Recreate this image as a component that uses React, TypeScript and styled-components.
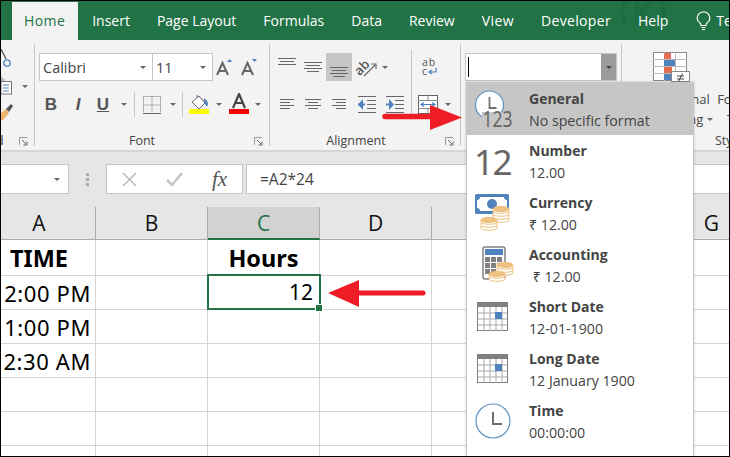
import React from 'react';
import styled, { createGlobalStyle } from 'styled-components';

const Global = createGlobalStyle`
  html, body { margin: 0; padding: 0; background: #fff; }
  * { box-sizing: border-box; }
`;
const UI = `"Open Sans", "Noto Sans", "Liberation Sans", sans-serif`;
const CELL = `"Noto Sans", "Open Sans", sans-serif`;

const Frame = styled.div`
  position: relative; width: 730px; height: 457px; overflow: hidden;
  display: flex; flex-direction: column;
  border: 1px solid #000;
  font-family: ${UI}; background: #fff;
`;
const TabBar = styled.div`
  position: relative; height: 39px; flex: none; background: #217346; display: flex; align-items: stretch; padding-left: 11px; padding-top: 1px;
`;
const Tab = styled.div<{ $active?: boolean; $ls?: number }>`
  position: relative; display: flex; align-items: center; justify-content: center;
  padding: 0 13px 1px ${p => (p.$active ? 12 : 13)}px; margin-right: 1px;
  white-space: nowrap; letter-spacing: ${p => p.$ls ?? 0}px;
  font-size: 14px; color: ${p => (p.$active ? '#217346' : '#fff')};
  background: ${p => (p.$active ? '#f3f3f3' : 'transparent')};
`;
const Tell = styled(Tab)`gap: 5px; padding-left: 14px;`;
const Watermark = styled.svg`position: absolute; left: 615px; top: -3px; width: 54px; height: 28px;`;

const Ribbon = styled.div`
  height: 112px; flex: none; background: #f3f3f3; display: flex; padding: 4px 0 4px;
  border-bottom: 2px solid #d6d6d6;
`;
const Group = styled.div<{ $w: number; $pl?: number }>`
  position: relative; width: ${p => p.$w}px; flex: none; display: flex; flex-direction: column;
  padding-left: ${p => p.$pl ?? 0}px; border-right: 1px solid #c6c6c6;
`;
const LastGroup = styled(Group)`border-right: none;`;
const Body = styled.div`display: flex; flex: none;`;
const Col = styled.div<{ $w?: number }>`
  display: flex; flex-direction: column; ${p => (p.$w ? `width:${p.$w}px;flex:none;` : '')}
`;
const Row1 = styled.div`display: flex; height: 28px; margin-top: 9px; flex: none;`;
const Row2 = styled.div`display: flex; height: 25px; margin-top: 11px; flex: none;`;
const Slot = styled.div<{ $w: number; $on?: boolean }>`
  width: ${p => p.$w}px; flex: none; display: flex; align-items: center; justify-content: center;
  background: ${p => (p.$on ? '#c6c6c6' : 'transparent')};
`;
const VSep = styled.div`width: 1px; height: 25px; background: #c6c6c6; flex: none;`;
const InnerSep = styled.div`width: 1px; height: 70px; margin-top: 6px; background: #c6c6c6; flex: none;`;
const Label = styled.div<{ $pr?: number }>`
  margin-top: auto; margin-bottom: -3px; height: 16px; line-height: 16px; font-size: 12.5px; color: #444; text-align: center; white-space: nowrap;
  padding-right: ${p => p.$pr ?? 0}px;
`;
const Launcher = styled.svg`position: absolute; right: 6px; bottom: 0; width: 9px; height: 9px;`;
const Caret = styled.i<{ $dark?: boolean }>`
  display: block; flex: none; width: 0; height: 0; border-left: 3.5px solid transparent; border-right: 3.5px solid transparent;
  border-top: 3.5px solid ${p => (p.$dark ? '#444' : '#666')};
`;
const Combo = styled.div<{ $w: number }>`
  width: ${p => p.$w}px; height: 28px; flex: none; background: #fff; border: 1px solid #c6c6c6;
  display: flex; align-items: center; justify-content: space-between; padding: 0 6px 0 3px;
  font-size: 14.5px; color: #444; margin-right: -1px;
`;
const NumberCombo = styled.div`
  width: 152px; height: 28px; flex: none; background: #fff; border: 1px solid #c6c6c6;
  display: flex; align-items: stretch; justify-content: space-between; padding-left: 2px;
`;
const Cursor = styled.i`display: block; width: 1px; height: 20px; margin-top: 3px; background: #000;`;
const ComboBtn = styled.div`width: 15px; background: #9b9b9b; display: flex; align-items: center; justify-content: center;`;
const Glyph = styled.span<{ $kind: 'b' | 'i' | 'u' }>`
  font-family: "Liberation Sans", sans-serif; font-size: 17px; color: #555; line-height: 1;
  font-weight: 700;
  font-style: ${p => (p.$kind === 'i' ? 'italic' : 'normal')};
  text-decoration: ${p => (p.$kind === 'u' ? 'underline' : 'none')};
`;
const StyleCol = styled.div<{ $w: number; $pl?: number }>`
  width: ${p => p.$w}px; flex: none; display: flex; flex-direction: column; align-items: center;
  padding-left: ${p => p.$pl ?? 0}px;
`;
const StyleIcon = styled.div<{ $ml?: number }>`
  height: 37px; margin-top: 8px; display: flex; align-items: flex-start; flex: none; align-self: flex-start;
  margin-left: ${p => p.$ml ?? 0}px;
`;
const StyleText = styled.div`
  font-size: 13px; line-height: 20px; color: #444; white-space: nowrap; display: flex; align-items: center; gap: 4px;
`;
const TableText = styled(StyleText)`margin-left: 9px;`;
const StyleLabel = styled(Label)`padding-left: 93px; text-align: left;`;
const ClipCol = styled.div`display: flex; flex-direction: column; height: 82px; padding-top: 3px;`;
const ClipRow = styled.div<{ $h: number }>`display: flex; height: ${p => p.$h}px; align-items: center; gap: 9px; flex: none;`;
const ClipLabel = styled(Label)`margin-left: -5px; text-align: left;`;

const FormulaArea = styled.div`
  height: 55px; flex: none; background: #e6e6e6; display: flex; align-items: flex-start; padding-top: 12px;
`;
const NameBox = styled.div`
  width: 68px; height: 30px; flex: none; background: #fff; border: 1px solid #c6c6c6; border-left: none;
  display: flex; align-items: center; justify-content: flex-end; padding-right: 8px;
`;
const Dots = styled.div`
  width: 37px; flex: none; height: 30px; display: flex; flex-direction: column; gap: 2px; align-items: center; justify-content: center;
  i { display: block; width: 3px; height: 3px; background: #a8a8a8; }
`;
const FxBox = styled.div`
  width: 137px; height: 30px; flex: none; background: #fff; border: 1px solid #c6c6c6; display: flex; align-items: center;
`;
const FxSlot = styled.div`width: 45px; flex: none; display: flex; align-items: center; justify-content: center;`;
const Fx = styled.span`font-family: "Liberation Serif", serif; font-style: italic; font-size: 21px; color: #555; line-height: 1;`;
const FormulaInput = styled.div`
  flex: 1; height: 30px; margin-left: 3px; background: #fff; border: 1px solid #c6c6c6; border-right: none;
  display: flex; align-items: center; padding-left: 13px; font-size: 15.5px; color: #444;
`;

const Sheet = styled.div`
  display: grid; grid-template-columns: 95px repeat(6, 112px); grid-auto-rows: 34px; flex: 1; overflow: hidden;
  grid-template-rows: 33px 36px; background: #fff; font-family: ${CELL};
`;
const Head = styled.div<{ $sel?: boolean; $pr?: number }>`
  background: ${p => (p.$sel ? '#d2d2d2' : '#e6e6e6')}; display: flex; align-items: center; justify-content: center;
  font-size: 21px; line-height: 1; color: ${p => (p.$sel ? '#217346' : '#111')};
  border-right: 1px solid #ababab;
  border-bottom: ${p => (p.$sel ? '2px solid #217346' : '1px solid #ababab')};
  font-family: ${UI};
  padding-top: 1px; padding-right: ${p => p.$pr ?? 0}px;
`;
const Cell = styled.div<{ $bold?: boolean; $align?: string; $pr?: number }>`
  position: relative; display: flex; align-items: center; justify-content: ${p => p.$align ?? 'flex-end'};
  padding-right: ${p => p.$pr ?? 4}px; overflow: hidden; white-space: nowrap;
  border-right: 1px solid #d4d4d4; border-bottom: 1px solid #d4d4d4;
  padding-top: ${p => (p.$bold ? 1 : 0)}px;
  font-size: ${p => (p.$bold ? 23.5 : 22)}px; font-weight: ${p => (p.$bold ? 700 : 400)}; color: #000;
  letter-spacing: ${p => (p.$bold ? 0 : 0.6)}px;
`;
const SelCell = styled.div`
  position: relative; z-index: 2; margin: -2px -1px 0 -1px; border: 2px solid #217346; display: flex; align-items: center;
  justify-content: flex-end; padding-right: 6px; font-size: 21px; color: #000; background: #fff;
  &::after { content: ''; position: absolute; right: -4px; bottom: -4px; width: 6px; height: 6px; background: #217346; border: 1px solid #fff; }
`;

const Menu = styled.div`
  position: absolute; left: 465px; top: 81px; width: 228px; height: 380px; background: #fff;
  border: 1px solid #c6c6c6; box-shadow: 0 0 2px rgba(0,0,0,.25); z-index: 5;
  display: flex; flex-direction: column;
`;
const Item = styled.div<{ $on?: boolean }>`
  height: 52px; flex: none; display: flex; background: ${p => (p.$on ? '#c6c6c6' : 'transparent')};
`;
const ItemIcon = styled.div`width: 62px; flex: none; padding-right: 11px; display: flex; align-items: center; justify-content: center;`;
const ItemText = styled.div`display: flex; flex-direction: column; padding-top: 5px; color: #444;`;
const Title = styled.div`font-size: 14px; line-height: 22px; font-weight: 700; color: #444;`;
const Desc = styled.div`font-size: 14.2px; line-height: 22px; color: #444;`;
const BigNum = styled.span`font-size: 35px; line-height: 1; color: #666; font-family: ${CELL}; letter-spacing: -1.5px;`;
const CalcSvg = styled.svg`margin-left: 10px; flex: none;`;
const Overlay = styled.svg`position: absolute; z-index: 6; overflow: visible;`;
const RightArrow = styled(Overlay)`left: 380px; top: 103px;`;
const LeftArrow = styled(Overlay)`left: 326px; top: 277px;`;

const L = ({ w, h, lines }: { w: number; h: number; lines: [number, number, number][] }) => (
  <svg width={w} height={h}>
    {lines.map(([x, y, len], i) => <rect key={i} x={x} y={y} width={len} height={1} fill="#666" />)}
  </svg>
);
const Launch = () => (
  <Launcher viewBox="0 0 9 9">
    <path d="M.5 8V.5H8" fill="none" stroke="#999" />
    <path d="M3 3l4 4M8 4.5V8H4.5" fill="none" stroke="#666" />
  </Launcher>
);
const Clock = () => (
  <svg width="36" height="36" viewBox="0 0 36 36">
    <circle cx="18" cy="18" r="17" fill="#fff" stroke="#5b8fc0" strokeWidth="1.2" />
    <path d="M18 9v12h9" fill="none" stroke="#707070" strokeWidth="2" />
  </svg>
);
const Calendar = () => (
  <svg width="32" height="30" viewBox="0 0 32 30">
    <rect x=".5" y=".5" width="30" height="28" fill="#fff" stroke="#808080" />
    <rect x="0" y="0" width="31" height="5" fill="#808080" />
    {[6.5, 12.5, 18.5, 24.5].map(x => <rect key={x} x={x} y="5" width="1" height="24" fill="#aaa" />)}
    {[10.5, 16.5, 22.5].map(y => <rect key={y} x="1" y={y} width="29" height="1" fill="#aaa" />)}
    <rect x="18" y="10" width="7" height="7" fill="#4f81bd" />
  </svg>
);
const Coins = ({ x, y, n = 3 }: { x: number; y: number; n?: number }) => (
  <g stroke="#edc27f" strokeWidth="1">
    {Array.from({ length: n }, (_, i) => n - 1 - i).map(i => (
      <path key={i} d={`M${x - 8} ${y + i * 3}c0 3 16 3 16 0v-2h-16z`} fill="#fff" />
    ))}
    <ellipse cx={x} cy={y - 2} rx="8" ry="2.600" fill="#edc27f" />
  </g>
);

export default function App() {
  return (
    <Frame>
      <Global />
      <TabBar>
        <Watermark viewBox="0 0 54 28">
          <g fill="none" stroke="#1e6c40" strokeWidth="4">
            <path d="M10 2a24 24 0 0 0 0 24M44 2a24 24 0 0 1 0 24" />
            <path d="M21 4v20M37 4L23 15l14 10" />
          </g>
        </Watermark>
        <Tab $active $ls={0.4}>Home</Tab>
        <Tab>Insert</Tab>
        <Tab>Page Layout</Tab>
        <Tab>Formulas</Tab>
        <Tab>Data</Tab>
        <Tab>Review</Tab>
        <Tab $ls={0.4}>View</Tab>
        <Tab $ls={0.35}>Developer</Tab>
        <Tab>Help</Tab>
        <Tell>
          <svg width="15" height="20" viewBox="0 0 15 20">
            <path d="M7.500 1a6 6 0 0 0-3.500 11c.7.6 1 1.200 1 2.500h5c0-1.300.3-1.900 1-2.500a6 6 0 0 0-3.500-11zM5.500 16.500h4M6 18.500h3" fill="none" stroke="#fff" strokeWidth="1.200" />
          </svg>
          Tell me
        </Tell>
      </TabBar>

      <Ribbon>
        <Group $w={34}>
          <ClipCol>
            <ClipRow $h={24}>
              <svg width="10" height="20" viewBox="0 0 10 20">
                <path d="M0 0l5 10" stroke="#666" strokeWidth="1.500" />
                <circle cx="6" cy="14" r="3.200" fill="none" stroke="#4f81bd" strokeWidth="1.300" />
              </svg>
            </ClipRow>
            <ClipRow $h={30}>
              <svg width="12" height="18" viewBox="0 0 12 18">
                <path d="M0 3h4M0 1h2" stroke="#888" />
                <rect x="0" y="4.500" width="10.500" height="12.500" fill="#fff" stroke="#777" />
                <path d="M2 8h6M2 11h6M2 14h6" stroke="#4f81bd" />
              </svg>
              <Caret />
            </ClipRow>
            <ClipRow $h={22}>
              <svg width="12" height="18" viewBox="0 0 12 18">
                <path d="M0 10l5-4 3 4-6 7H0z" fill="#efb36f" />
                <path d="M5 6l5-5 2 2-4 6z" fill="#555" />
              </svg>
            </ClipRow>
          </ClipCol>
          <ClipLabel>d</ClipLabel>
          <Launch />
        </Group>

        <Group $w={235} $pl={4}>
          <Row1>
            <Combo $w={114}>Calibri<Caret /></Combo>
            <Combo $w={61}>11<Caret /></Combo>
            <Slot $w={25}>
              <svg width="18" height="18" viewBox="0 0 18 18">
                <path d="M1 17L6.500 5 12 17M3 13h7" fill="none" stroke="#666" strokeWidth="2" />
                <path d="M11 4l2.500-3L16 4z" fill="#4f81bd" />
              </svg>
            </Slot>
            <Slot $w={25}>
              <svg width="18" height="18" viewBox="0 0 18 18">
                <path d="M1 17L6.500 5 12 17M3 13h7" fill="none" stroke="#666" strokeWidth="2" />
                <path d="M11 1h5l-2.500 3z" fill="#4f81bd" />
              </svg>
            </Slot>
          </Row1>
          <Row2>
            <Slot $w={24}><Glyph $kind="b">B</Glyph></Slot>
            <Slot $w={30}><Glyph $kind="i">I</Glyph></Slot>
            <Slot $w={20}><Glyph $kind="u">U</Glyph></Slot>
            <Slot $w={21}><Caret /></Slot>
            <VSep />
            <Slot $w={33}>
              <svg width="18" height="18" viewBox="0 0 18 18">
                <path d="M.5.5h17M.5 9h17M.5.5v16M9 .500v16M17.500.500v16" stroke="#777" strokeDasharray="1 1" fill="none" />
                <path d="M0 17.500h18" stroke="#666" />
              </svg>
            </Slot>
            <Slot $w={10}><Caret /></Slot>
            <Slot $w={4} />
            <VSep />
            <Slot $w={32}>
              <svg width="20" height="23" viewBox="0 0 20 23">
                <path d="M3 9l7-6 6 7-6 6z" fill="#fff" stroke="#666" />
                <path d="M8 5V2M15 6c3 1 4 4 3 7-1-1-2-3-3-7z" fill="#4f81bd" stroke="#4f81bd" />
                <rect x="0" y="16" width="20" height="5" fill="#ffff00" />
              </svg>
            </Slot>
            <Slot $w={8}><Caret /></Slot>
            <Slot $w={32}>
              <svg width="20" height="23" viewBox="0 0 20 23">
                <path d="M4 15L10 1l6 14M6 10h8" fill="none" stroke="#444" strokeWidth="2.200" />
                <rect x="0" y="16" width="20" height="5" fill="#ff0000" />
              </svg>
            </Slot>
            <Slot $w={6}><Caret /></Slot>
          </Row2>
          <Label $pr={24}>Font</Label>
          <Launch />
        </Group>

        <Group $w={191} $pl={4}>
          <Body>
            <Col $w={137}>
              <Row1>
                <Slot $w={26}><L w={18} h={28} lines={[[0, 5, 18], [2, 8, 14], [0, 11, 18]]} /></Slot>
                <Slot $w={26}><L w={18} h={28} lines={[[0, 9, 18], [2, 12, 14], [0, 15, 18], [3, 18, 12]]} /></Slot>
                <Slot $w={26} $on><L w={18} h={28} lines={[[0, 14, 18], [2, 17, 14], [0, 20, 18], [3, 23, 12]]} /></Slot>
                <Slot $w={28}>
                  <svg width="22" height="21" viewBox="0 0 22 21">
                    <g transform="rotate(-45 8 10)">
                      <text x="-1" y="14" fontSize="13" fontFamily="Open Sans" fill="#555" fontWeight="600">ab</text>
                    </g>
                    <path d="M9 19L20 8M16 7h5v5" fill="none" stroke="#666" strokeWidth="1.200" />
                  </svg>
                </Slot>
                <Slot $w={10}><Caret /></Slot>
              </Row1>
              <Row2>
                <Slot $w={26}><L w={14} h={25} lines={[[0, 7, 14], [0, 10, 10], [0, 13, 14], [0, 16, 10]]} /></Slot>
                <Slot $w={26}><L w={16} h={25} lines={[[0, 7, 16], [3, 10, 10], [0, 13, 16], [3, 16, 10]]} /></Slot>
                <Slot $w={26}><L w={14} h={25} lines={[[0, 7, 14], [4, 10, 10], [0, 13, 14], [4, 16, 10]]} /></Slot>
                <Slot $w={30}>
                  <svg width="18" height="17" viewBox="0 0 18 17">
                    <path d="M0 .500h18M9 4.500h9M9 8.500h9M9 12.500h9M0 16.500h18" stroke="#666" />
                    <path d="M0 8.500h7" stroke="#4f81bd" strokeWidth="2" />
                    <path d="M5 3L0 8.500 5 14z" fill="#4f81bd" />
                  </svg>
                </Slot>
                <Slot $w={25}>
                  <svg width="18" height="17" viewBox="0 0 18 17">
                    <path d="M0 .500h18M9 4.500h9M9 8.500h9M9 12.500h9M0 16.500h18" stroke="#666" />
                    <path d="M0 8.500h5" stroke="#4f81bd" strokeWidth="2" />
                    <path d="M3 3l5 5.500L3 14z" fill="#4f81bd" />
                  </svg>
                </Slot>
              </Row2>
            </Col>
            <InnerSep />
            <Col>
              <Row1>
                <Slot $w={35}>
                  <svg width="17" height="18" viewBox="0 0 17 18">
                    <text x="1" y="8" fontSize="10.500" fontFamily="Open Sans" fill="#555" letterSpacing="1">ab</text>
                    <text x="1" y="17" fontSize="10.500" fontFamily="Open Sans" fill="#555">c</text>
                    <path d="M15 10v4H9M11 12l-3 2 3 2" fill="none" stroke="#4f81bd" strokeWidth="1.200" />
                  </svg>
                </Slot>
              </Row1>
              <Row2>
                <Slot $w={32}>
                  <svg width="20" height="19" viewBox="0 0 20 19">
                    <rect x=".5" y=".5" width="19" height="18" fill="#fff" stroke="#666" />
                    <path d="M0 5.500h20M0 13.500h20M10 0v5M10 14v5" stroke="#888" />
                    <path d="M4 9.500h12M6 7.500l-3 2 3 2M14 7.500l3 2-3 2" fill="none" stroke="#4f81bd" strokeWidth="1.200" />
                  </svg>
                </Slot>
                <Slot $w={8}><Caret /></Slot>
              </Row2>
            </Col>
          </Body>
          <Label $pr={22}>Alignment</Label>
          <Launch />
        </Group>

        <Group $w={161} $pl={4}>
          <Row1>
            <NumberCombo>
              <Cursor />
              <ComboBtn><Caret $dark /></ComboBtn>
            </NumberCombo>
          </Row1>
          <Label>Number</Label>
        </Group>

        <LastGroup $w={200}>
          <Body>
            <StyleCol $w={94} $pl={12}>
              <StyleIcon $ml={19}>
                <svg width="38" height="30" viewBox="0 0 38 30">
                  <rect x=".5" y=".5" width="33" height="28" fill="#fff" stroke="#888" />
                  <path d="M0 7.500h34M0 14.500h34M0 21.500h34M11.500 0v29M22.500 0v29" stroke="#bbb" />
                  <rect x="11" y="1" width="7" height="6" fill="#e46c4f" />
                  <rect x="11" y="8" width="11" height="6" fill="#4f81bd" />
                  <rect x="11" y="15" width="8" height="6" fill="#e46c4f" />
                  <rect x="11" y="22" width="7" height="6" fill="#4f81bd" />
                  <rect x="18.500" y="19.500" width="18" height="10" fill="#fff" stroke="#888" />
                  <path d="M24 24h7M24 27h7M29.500 21.500l-4 8" stroke="#444" fill="none" />
                </svg>
              </StyleIcon>
              <StyleText>Conditional</StyleText>
              <StyleText>Formatting <Caret /></StyleText>
            </StyleCol>
            <StyleCol $w={46}>
              <StyleIcon />
              <StyleText>Format</StyleText>
              <TableText>Table</TableText>
            </StyleCol>
          </Body>
          <StyleLabel>Styles</StyleLabel>
        </LastGroup>
      </Ribbon>

      <FormulaArea>
        <NameBox><Caret /></NameBox>
        <Dots><i /><i /><i /></Dots>
        <FxBox>
          <FxSlot>
            <svg width="15" height="15" viewBox="0 0 15 15"><path d="M1 1l13 13M14 1L1 14" stroke="#bdbdbd" strokeWidth="1.600" /></svg>
          </FxSlot>
          <FxSlot>
            <svg width="17" height="15" viewBox="0 0 17 15"><path d="M1 8l5 5L16 1" fill="none" stroke="#c4c4c4" strokeWidth="2.500" /></svg>
          </FxSlot>
          <FxSlot><Fx>fx</Fx></FxSlot>
        </FxBox>
        <FormulaInput>=A2*24</FormulaInput>
      </FormulaArea>

      <Sheet>
        <Head $pr={18}>A</Head><Head>B</Head><Head $sel>C</Head><Head>D</Head><Head>E</Head><Head>F</Head><Head>G</Head>

        <Cell $bold $align="center" $pr={18}>TIME</Cell><Cell /><Cell $bold $align="center" $pr={0}>Hours</Cell><Cell /><Cell /><Cell /><Cell />
        <Cell>12:00 PM</Cell><Cell /><SelCell>12</SelCell><Cell /><Cell /><Cell /><Cell />
        <Cell>1:00 PM</Cell><Cell /><Cell /><Cell /><Cell /><Cell /><Cell />
        <Cell>2:30 AM</Cell><Cell /><Cell /><Cell /><Cell /><Cell /><Cell />
        <Cell /><Cell /><Cell /><Cell /><Cell /><Cell /><Cell />
        <Cell /><Cell /><Cell /><Cell /><Cell /><Cell /><Cell />
        <Cell /><Cell /><Cell /><Cell /><Cell /><Cell /><Cell />
      </Sheet>

      <RightArrow width="84" height="30" viewBox="0 0 84 30">
        <path d="M4 12.500H52" stroke="#ee1c25" strokeWidth="5.500" strokeLinecap="round" />
        <path d="M49 1L81 13.500 49 26z" fill="#ee1c25" />
      </RightArrow>
      <LeftArrow width="100" height="32" viewBox="0 0 100 32">
        <path d="M30 15H96" stroke="#ee1c25" strokeWidth="5" strokeLinecap="round" />
        <path d="M1 15L32 2v27z" fill="#ee1c25" />
      </LeftArrow>

      <Menu>
        <Item $on>
          <ItemIcon>
            <svg width="50" height="52" viewBox="0 0 50 52">
              <circle cx="21.500" cy="22" r="14" fill="#fff" stroke="#5b8fc0" strokeWidth="1.200" />
              <path d="M21.500 14v11h7" fill="none" stroke="#707070" strokeWidth="1.800" />
              <rect x="14" y="29" width="36" height="23" fill="#c6c6c6" />
              <text x="14.500" y="44" fontSize="22" fontFamily="Noto Sans" fill="#666" textLength="30" lengthAdjust="spacingAndGlyphs">123</text>
            </svg>
          </ItemIcon>
          <ItemText><Title>General</Title><Desc>No specific format</Desc></ItemText>
        </Item>
        <Item>
          <ItemIcon><BigNum>12</BigNum></ItemIcon>
          <ItemText><Title>Number</Title><Desc>12.00</Desc></ItemText>
        </Item>
        <Item>
          <ItemIcon>
            <svg width="35" height="38" viewBox="0 0 35 38">
              <rect x="0" y="0" width="34" height="20" rx="1.500" fill="#4f81bd" />
              <path d="M5 3h24c0 2 1 3 3 3v8c-2 0-3 1-3 3H5c0-2-1-3-3-3V6c2 0 3-1 3-3z" fill="#fff" />
              <circle cx="17" cy="10" r="5" fill="#4f81bd" />
              <Coins x={26} y={17} n={4} />
              <Coins x={14} y={28} n={3} />
            </svg>
          </ItemIcon>
          <ItemText><Title>Currency</Title><Desc>₹ 12.00</Desc></ItemText>
        </Item>
        <Item>
          <ItemIcon>
            <CalcSvg width="32" height="38" viewBox="0 0 32 38">
              <rect x="1" y="1" width="22" height="32" rx="2" fill="#fff" stroke="#808080" strokeWidth="1.500" />
              <rect x="3" y="3" width="18" height="6" fill="#4f81bd" />
              {[11, 17, 23].map(y => [3, 9, 15].map(x => <rect key={`${x}${y}`} x={x} y={y} width="5" height="5" fill="#808080" />))}
              <Coins x={23} y={21} n={3} />
              <Coins x={15} y={30} n={2} />
            </CalcSvg>
          </ItemIcon>
          <ItemText><Title>Accounting</Title><Desc>&nbsp;₹ 12.00</Desc></ItemText>
        </Item>
        <Item>
          <ItemIcon><Calendar /></ItemIcon>
          <ItemText><Title>Short Date</Title><Desc>12-01-1900</Desc></ItemText>
        </Item>
        <Item>
          <ItemIcon><Calendar /></ItemIcon>
          <ItemText><Title>Long Date</Title><Desc>12 January 1900</Desc></ItemText>
        </Item>
        <Item>
          <ItemIcon><Clock /></ItemIcon>
          <ItemText><Title>Time</Title><Desc>00:00:00</Desc></ItemText>
        </Item>
      </Menu>
    </Frame>
  );
}
